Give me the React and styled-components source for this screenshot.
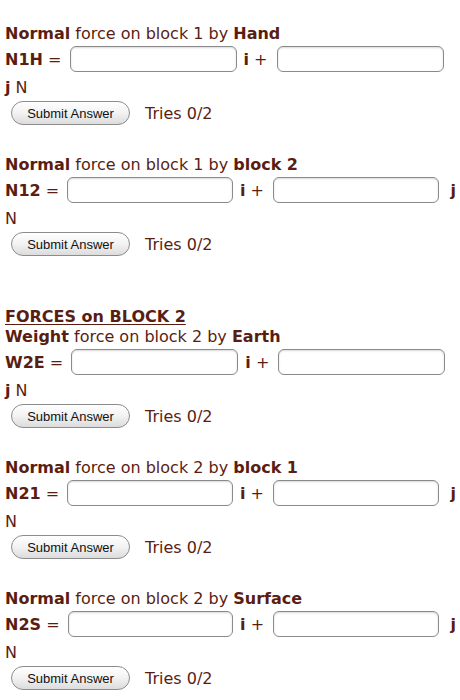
import React from 'react';
import styled, { createGlobalStyle } from 'styled-components';

const GlobalStyle = createGlobalStyle`
  body {
    margin: 0;
    background: #fff;
    font-family: 'DejaVu Sans', Verdana, sans-serif;
    color: #5a1d12;
  }
`;

const Page = styled.div`
  padding: 24px 4px 0 5px;
`;

const Block = styled.section`
  margin-bottom: 30px;
`;

const SectionHeader = styled.h2`
  margin: 0;
  height: 20px;
  line-height: 20px;
  font-size: 16px;
  font-weight: bold;
  text-decoration: underline;
  text-underline-offset: 2px;
`;

const Title = styled.div`
  height: 20px;
  line-height: 20px;
  font-size: 16px;
`;

const Row = styled.div`
  display: flex;
  align-items: center;
  margin-top: 2px;
  height: 26px;
  font-size: 16px;
`;

const Label = styled.span`
  white-space: pre;
  padding-right: 3px;
  flex-shrink: 0;
`;

const Field = styled.input`
  box-sizing: border-box;
  flex: 0 1 167px;
  min-width: 0;
  height: 26px;
  border: 1px solid #8a8a8a;
  border-radius: 6px;
  box-shadow: inset 0 1px 2px rgba(0, 0, 0, 0.15);
  background: #fff;
  padding: 0 6px;
  outline: none;
`;

const Plus = styled.span`
  white-space: pre;
  flex-shrink: 0;
  padding: 0 9px 0 7px;
`;

const Suffix = styled.b`
  flex-shrink: 0;
  margin-left: 12px;
`;

const Unit = styled.div`
  margin-top: 6px;
  height: 20px;
  line-height: 20px;
  font-size: 16px;
`;

const Actions = styled.div`
  display: flex;
  align-items: center;
  margin-top: 3px;
  padding-left: 6px;
  gap: 15px;
`;

const SubmitButton = styled.button`
  box-sizing: border-box;
  width: 119px;
  height: 24px;
  border: 1px solid #8c8c8c;
  border-radius: 12px;
  background: linear-gradient(#ffffff, #f2f2f2 50%, #dcdcdc);
  font-family: 'Liberation Sans', Arial, sans-serif;
  font-size: 13px;
  color: #111;
  padding: 0;
`;

const Tries = styled.span`
  font-size: 16px;
`;

const ForceBlock = ({ kind, target, source, name, wrapJ }) => (
  <Block>
    <Title>
      <b>{kind}</b> force on block {target} by <b>{source}</b>
    </Title>
    <Row>
      <Label>
        <b>{name}</b> ={' '}
      </Label>
      <Field type="text" />
      <Plus>
        <b>i</b> +
      </Plus>
      <Field type="text" />
      {!wrapJ && <Suffix>j</Suffix>}
    </Row>
    <Unit>
      {wrapJ ? (
        <>
          <b>j</b> N
        </>
      ) : (
        'N'
      )}
    </Unit>
    <Actions>
      <SubmitButton>Submit Answer</SubmitButton>
      <Tries>Tries 0/2</Tries>
    </Actions>
  </Block>
);

const Gap = styled.div`
  height: 21px;
`;

export default function App() {
  return (
    <>
      <GlobalStyle />
      <Page>
        <ForceBlock kind="Normal" target="1" source="Hand" name="N1H" wrapJ />
        <ForceBlock kind="Normal" target="1" source="block 2" name="N12" />
        <Gap />
        <SectionHeader>FORCES on BLOCK 2</SectionHeader>
        <ForceBlock kind="Weight" target="2" source="Earth" name="W2E" wrapJ />
        <ForceBlock kind="Normal" target="2" source="block 1" name="N21" />
        <ForceBlock kind="Normal" target="2" source="Surface" name="N2S" />
      </Page>
    </>
  );
}
